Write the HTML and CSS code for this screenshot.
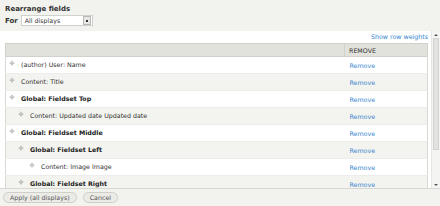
FILE: index.html
```html
<!DOCTYPE html>
<html>
<head>
<meta charset="utf-8">
<link rel="stylesheet" href="styles.css">
</head>
<body>
<div class="modal">
  <div class="head">
    <div class="title">Rearrange fields</div>
    <div class="for-row">
      <span class="for-label">For</span>
      <span class="select"><span class="select-text">All displays</span><span class="select-btn"><span class="arrow"></span></span></span>
    </div>
  </div>
  <div class="middle">
    <div class="scroll">
      <div class="weights"><a class="link">Show row weights</a></div>
      <table class="fields">
        <thead>
          <tr><th class="c-name"></th><th class="c-rm">REMOVE</th></tr>
        </thead>
        <tbody>
          <tr class="odd"><td class="c-name"><span class="ind l0"><svg class="handle" viewBox="0 0 8 8"><path d="M4 0.5 L5.5 2 H4.5 V3.5 H6 V2.5 L7.5 4 L6 5.5 V4.5 H4.5 V6 H5.5 L4 7.5 L2.5 6 H3.5 V4.5 H2 V5.5 L0.5 4 L2 2.5 V3.5 H3.5 V2 H2.5 Z"/></svg>(author) User: Name</span></td><td class="c-rm"><a class="link">Remove</a></td></tr>
          <tr class="even"><td class="c-name"><span class="ind l0"><svg class="handle" viewBox="0 0 8 8"><path d="M4 0.5 L5.5 2 H4.5 V3.5 H6 V2.5 L7.5 4 L6 5.5 V4.5 H4.5 V6 H5.5 L4 7.5 L2.5 6 H3.5 V4.5 H2 V5.5 L0.5 4 L2 2.5 V3.5 H3.5 V2 H2.5 Z"/></svg>Content: Title</span></td><td class="c-rm"><a class="link">Remove</a></td></tr>
          <tr class="odd"><td class="c-name"><span class="ind l0 b"><svg class="handle" viewBox="0 0 8 8"><path d="M4 0.5 L5.5 2 H4.5 V3.5 H6 V2.5 L7.5 4 L6 5.5 V4.5 H4.5 V6 H5.5 L4 7.5 L2.5 6 H3.5 V4.5 H2 V5.5 L0.5 4 L2 2.5 V3.5 H3.5 V2 H2.5 Z"/></svg>Global: Fieldset Top</span></td><td class="c-rm"><a class="link">Remove</a></td></tr>
          <tr class="even"><td class="c-name"><span class="ind l1"><svg class="handle" viewBox="0 0 8 8"><path d="M4 0.5 L5.5 2 H4.5 V3.5 H6 V2.5 L7.5 4 L6 5.5 V4.5 H4.5 V6 H5.5 L4 7.5 L2.5 6 H3.5 V4.5 H2 V5.5 L0.5 4 L2 2.5 V3.5 H3.5 V2 H2.5 Z"/></svg>Content: Updated date Updated date</span></td><td class="c-rm"><a class="link">Remove</a></td></tr>
          <tr class="odd"><td class="c-name"><span class="ind l0 b"><svg class="handle" viewBox="0 0 8 8"><path d="M4 0.5 L5.5 2 H4.5 V3.5 H6 V2.5 L7.5 4 L6 5.5 V4.5 H4.5 V6 H5.5 L4 7.5 L2.5 6 H3.5 V4.5 H2 V5.5 L0.5 4 L2 2.5 V3.5 H3.5 V2 H2.5 Z"/></svg>Global: Fieldset Middle</span></td><td class="c-rm"><a class="link">Remove</a></td></tr>
          <tr class="even"><td class="c-name"><span class="ind l1 b"><svg class="handle" viewBox="0 0 8 8"><path d="M4 0.5 L5.5 2 H4.5 V3.5 H6 V2.5 L7.5 4 L6 5.5 V4.5 H4.5 V6 H5.5 L4 7.5 L2.5 6 H3.5 V4.5 H2 V5.5 L0.5 4 L2 2.5 V3.5 H3.5 V2 H2.5 Z"/></svg>Global: Fieldset Left</span></td><td class="c-rm"><a class="link">Remove</a></td></tr>
          <tr class="odd"><td class="c-name"><span class="ind l2"><svg class="handle" viewBox="0 0 8 8"><path d="M4 0.5 L5.5 2 H4.5 V3.5 H6 V2.5 L7.5 4 L6 5.5 V4.5 H4.5 V6 H5.5 L4 7.5 L2.5 6 H3.5 V4.5 H2 V5.5 L0.5 4 L2 2.5 V3.5 H3.5 V2 H2.5 Z"/></svg>Content: Image Image</span></td><td class="c-rm"><a class="link">Remove</a></td></tr>
          <tr class="even"><td class="c-name"><span class="ind l1 b"><svg class="handle" viewBox="0 0 8 8"><path d="M4 0.5 L5.5 2 H4.5 V3.5 H6 V2.5 L7.5 4 L6 5.5 V4.5 H4.5 V6 H5.5 L4 7.5 L2.5 6 H3.5 V4.5 H2 V5.5 L0.5 4 L2 2.5 V3.5 H3.5 V2 H2.5 Z"/></svg>Global: Fieldset Right</span></td><td class="c-rm"><a class="link">Remove</a></td></tr>
        </tbody>
      </table>
    </div>
    <div class="scrollbar">
      <div class="sb-btn"><span class="sb-up"></span></div>
      <div class="sb-track"><div class="sb-thumb"></div></div>
      <div class="sb-btn"><span class="sb-down"></span></div>
    </div>
  </div>
  <div class="foot">
    <span class="btn">Apply (all displays)</span>
    <span class="btn">Cancel</span>
  </div>
</div>
</body>
</html>
```
FILE: styles.css
```css
html, body {
  margin: 0;
  padding: 0;
  background: #ffffff;
}
body {
  font-family: "DejaVu Sans", Verdana, sans-serif;
  font-size: 6.3px;
  color: #333333;
}
.modal {
  width: 440px;
  height: 206px;
  display: flex;
  flex-direction: column;
  overflow: hidden;
}
.head {
  background: #f2f2ee;
  height: 31px;
  box-sizing: border-box;
  padding: 5px 5px 0 5px;
}
.title {
  font-weight: bold;
  font-size: 7px;
  color: #333;
  line-height: 9px;
}
.for-row {
  display: flex;
  align-items: center;
  gap: 3px;
  margin-top: 1px;
}
.for-label {
  font-weight: bold;
  font-size: 7px;
}
.select {
  display: flex;
  align-items: center;
  width: 72px;
  height: 11px;
  box-sizing: border-box;
  border: 1px solid #d0d0cc;
  background: #fff;
}
.select-text {
  flex: 1;
  padding-left: 3px;
  font-size: 6.3px;
}
.select-btn {
  width: 6px;
  height: 7px;
  margin-right: 1px;
  background: #e6e6e4;
  border: 1px solid #b8b8b4;
  display: flex;
  align-items: center;
  justify-content: center;
}
.arrow {
  width: 2px;
  height: 2px;
  background: #333;
}
.middle {
  flex: 1;
  min-height: 0;
  display: flex;
}
.scroll {
  flex: 1;
  min-width: 0;
  overflow: hidden;
  background: #fff;
  padding: 0 3px 0 5px;
}
.scrollbar {
  width: 8px;
  display: flex;
  flex-direction: column;
  background: #f4f4f2;
  border-left: 1px solid #e6e6e2;
}
.sb-btn {
  height: 7px;
  display: flex;
  align-items: center;
  justify-content: center;
}
.sb-up, .sb-down {
  width: 0;
  height: 0;
  border-left: 2px solid transparent;
  border-right: 2px solid transparent;
}
.sb-up { border-bottom: 2px solid #555; }
.sb-down { border-top: 2px solid #555; }
.sb-track {
  flex: 1;
  padding: 0 1px;
}
.sb-thumb {
  height: 112px;
  background: #e2e2e0;
  border: 1px solid #d2d2cf;
  box-sizing: border-box;
}
.weights {
  text-align: right;
  height: 12px;
  line-height: 12px;
}
.link {
  color: #3385cf;
  text-decoration: none;
}
.fields {
  width: 100%;
  border-collapse: collapse;
  border: 1px solid #d9d9d3;
}
.fields th {
  background: #e2e2dd;
  text-align: left;
  font-weight: normal;
  font-size: 6.3px;
  color: #333;
  height: 12px;
  padding: 0 4px;
  border: 1px solid #d2d2cc;
}
.fields td {
  height: 16px;
  padding: 0 3px;
  border-top: 1px solid #ececea;
}
.fields td.c-rm {
  padding-left: 5px;
}
.fields .c-rm {
  width: 74px;
}
tr.even td {
  background: #f3f3ef;
}
tr.odd td {
  background: #ffffff;
}
.ind {
  display: inline-flex;
  align-items: center;
}
.ind.b {
  font-weight: bold;
  color: #222;
}
.l0 { padding-left: 0; }
.l1 { padding-left: 9px; }
.l2 { padding-left: 20px; }
.handle {
  width: 6px;
  height: 6px;
  fill: #a8a8a8;
  margin-right: 6px;
  position: relative;
  top: -2px;
}
.foot {
  background: #f2f2ee;
  border-top: 1px solid #d8d8d2;
  height: 18px;
  flex-shrink: 0;
  box-sizing: border-box;
  display: flex;
  align-items: center;
  gap: 6px;
  padding-left: 3px;
}
.btn {
  display: inline-block;
  border: 1px solid #cfcfc8;
  border-radius: 6px;
  background: #ebebe7;
  color: #555;
  padding: 0 6px;
  height: 11px;
  box-sizing: border-box;
  font-size: 6.3px;
  line-height: 9px;
}
```
